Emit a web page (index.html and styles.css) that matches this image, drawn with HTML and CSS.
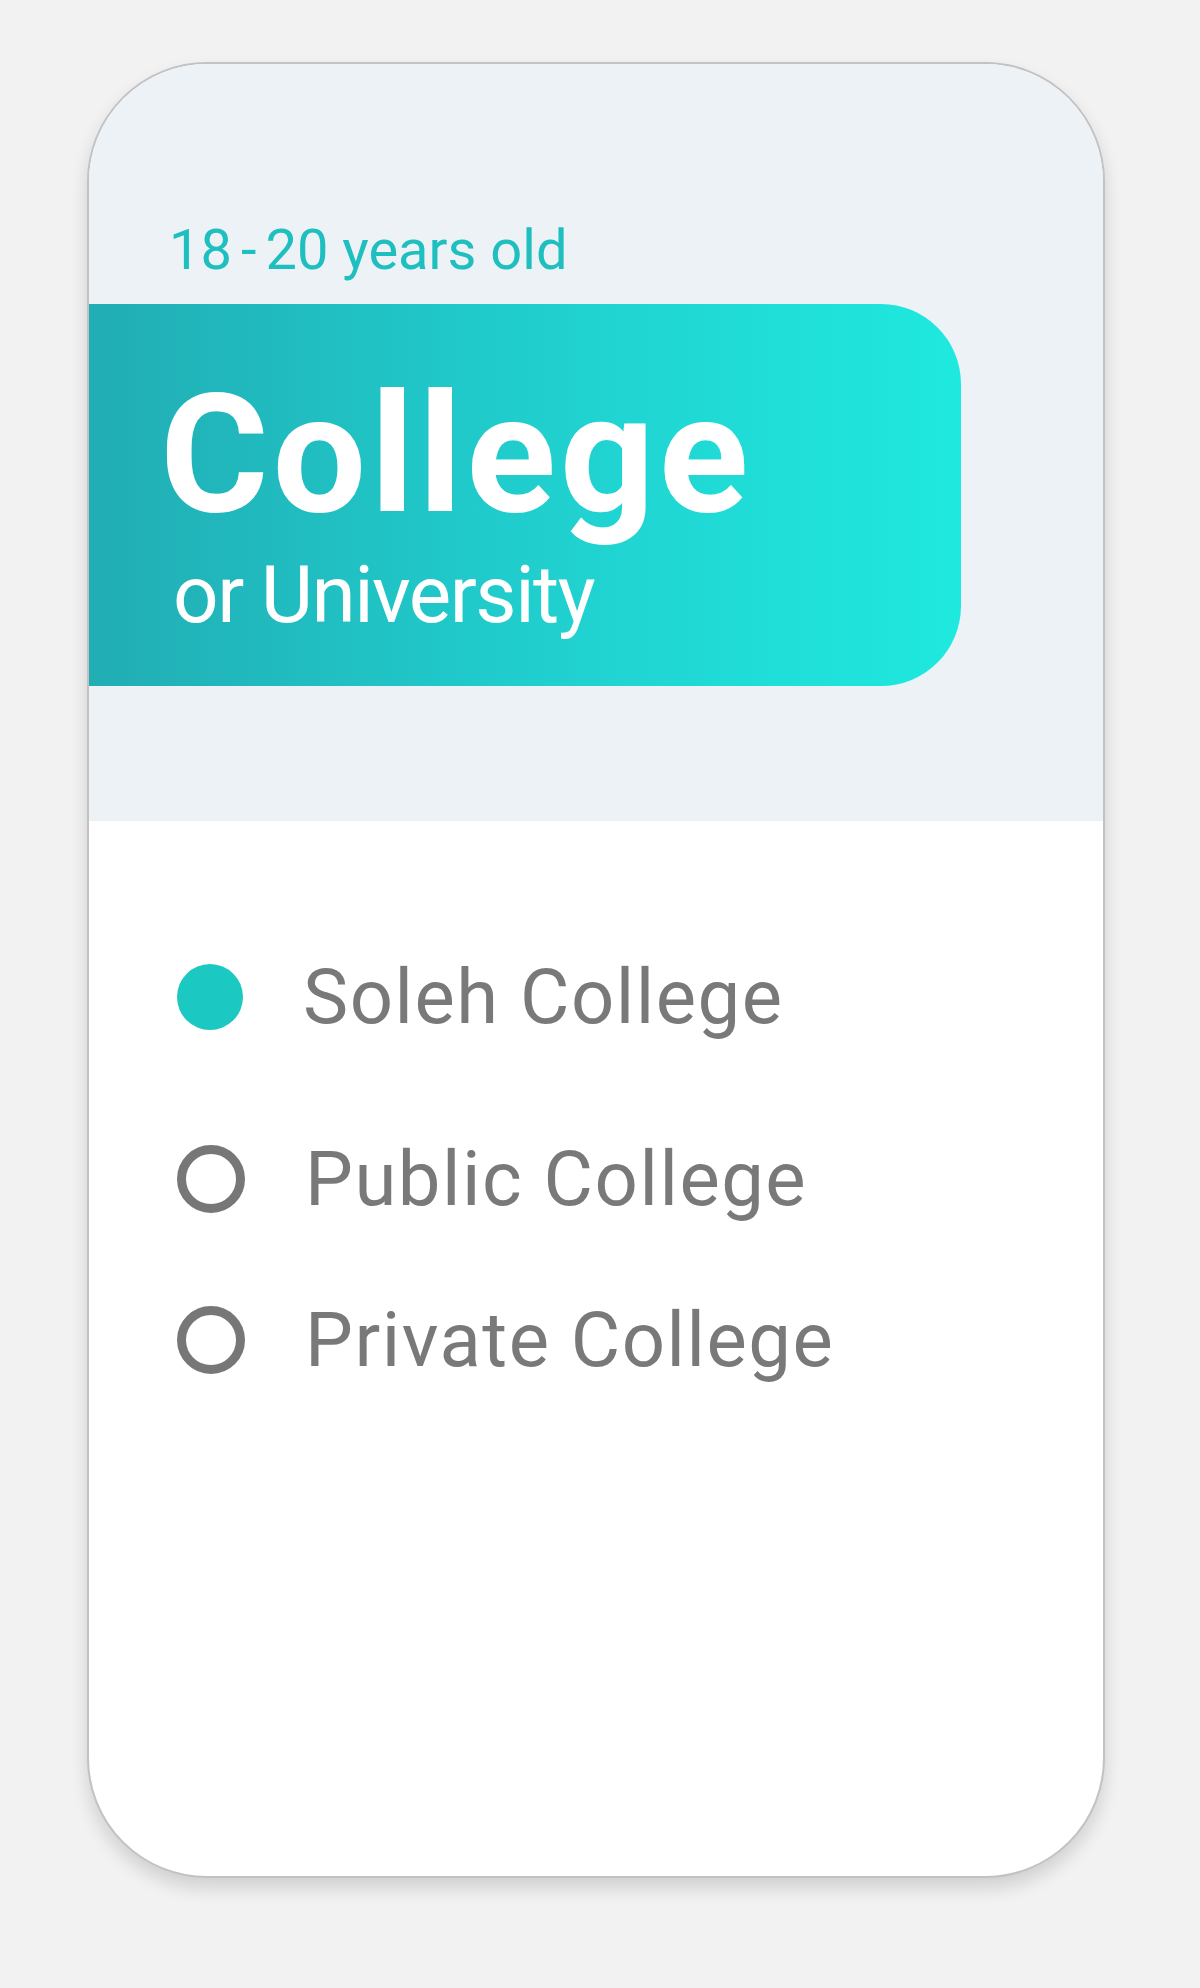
FILE: index.html
```html
<!DOCTYPE html>
<html>
<head>
    <title>College or University</title>
    <link rel="stylesheet" href="styles.css">
</head>
<body>
    <div class="card">
        <div class="card-header">
            <div class="age">18<span class="dash">-</span>20 years old</div>
            <div class="banner">
                <div class="banner-title">College</div>
                <div class="banner-sub">or University</div>
            </div>
        </div>

        <div class="options">
            <div class="option option-first">
                <span class="radio radio-on"></span>
                <span class="option-label">Soleh College</span>
            </div>
            <div class="option option-second">
                <span class="radio"></span>
                <span class="option-label">Public College</span>
            </div>
            <div class="option">
                <span class="radio"></span>
                <span class="option-label">Private College</span>
            </div>
        </div>
    </div>
</body>
</html>
```

FILE: styles.css
```css
body {
    margin: 0;
    padding: 62px 0 0 87px;
    background-color: #f2f2f2;
    font-family: Roboto, 'Liberation Sans', sans-serif;
    min-height: 100vh;
    box-sizing: border-box;
}

.card {
    width: 1018px;
    height: 1816px;
    box-sizing: border-box;
    border: 2px solid #c2c2c2;
    border-radius: 120px;
    background-color: #ffffff;
    overflow: hidden;
    box-shadow: 0 10px 18px rgba(0, 0, 0, 0.14);
}

.card-header {
    background-color: #edf2f7;
    height: 757px;
    padding-top: 158px;
    box-sizing: border-box;
    border-bottom: 1px solid #e9eef3;
}

.age {
    color: #1fbfbf;
    font-size: 56px;
    line-height: 1;
    padding-left: 80px;
}

.dash {
    margin: 0 9px;
}

.banner {
    margin-top: 26px;
    width: 872px;
    height: 382px;
    box-sizing: border-box;
    padding: 68px 0 0 71px;
    border-radius: 0 80px 80px 0;
    background: linear-gradient(to right, #21adb4, #20d4d2 60%, #1fe9de);
    color: #ffffff;
}

.banner-title {
    font-size: 166px;
    font-weight: 700;
    line-height: 1;
    letter-spacing: 4px;
}

.banner-sub {
    font-size: 80px;
    line-height: 1;
    margin-top: 17px;
    padding-left: 13px;
    letter-spacing: -1.5px;
}

.options {
    padding: 143px 0 0 88px;
}

.option {
    display: flex;
    align-items: center;
    gap: 60px;
    height: 66px;
    margin-bottom: 95px;
}

.option-first {
    margin-bottom: 116px;
}

.radio {
    width: 68px;
    height: 68px;
    box-sizing: border-box;
    border: 9px solid #777777;
    border-radius: 50%;
    flex-shrink: 0;
}

.radio-on {
    width: 66px;
    height: 66px;
    border: none;
    background-color: #1bc8c2;
}

.option-label {
    color: #797979;
    font-size: 76px;
    letter-spacing: 1.5px;
    line-height: 1;
}
```
